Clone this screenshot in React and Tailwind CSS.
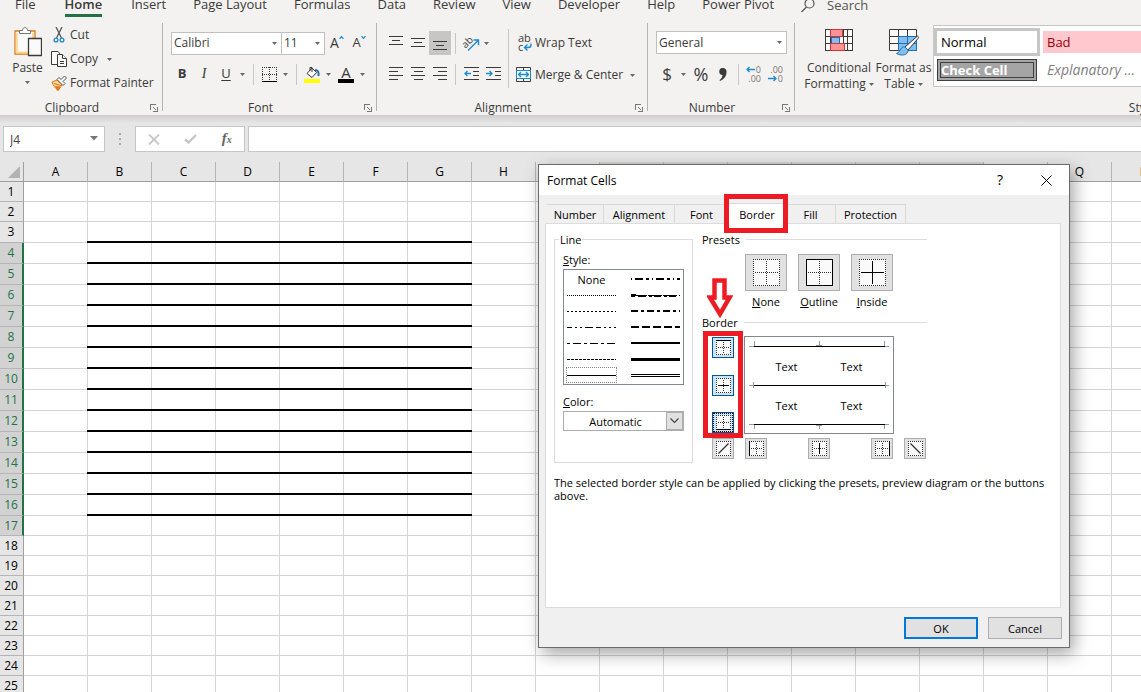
import { useState } from "react";
import clsx from "clsx";

const MENU = ["File", "Home", "Insert", "Page Layout", "Formulas", "Data", "Review", "View", "Developer", "Help", "Power Pivot"];
const COLUMNS = "ABCDEFGHIJKLMNOPQRSTUVWXYZ".split("");
const ROWS = Array.from({ length: 30 }, (_, i) => i + 1);

const LINE_STYLES = [
    { name: "None" },
    { name: "Dash dot dot", width: 2, dash: "1 3 8 3 3 3" },
    { name: "Hair", width: 1, dash: "1 1" },
    { name: "Slanted dash dot", slant: true },
    { name: "Dotted", width: 1, dash: "2 2" },
    { name: "Medium dash dot", width: 2, dash: "7 3 3 3" },
    { name: "Thin dash dot dot", width: 1, dash: "5 3 2 3 2 3 8 3" },
    { name: "Medium dashed", width: 2, dash: "8 3" },
    { name: "Thin dash dot", width: 1, dash: "3 3 8 3" },
    { name: "Medium", width: 2 },
    { name: "Dashed", width: 1, dash: "3 1" },
    { name: "Thick", width: 3 },
    { name: "Thin", width: 1 },
    { name: "Double", double: true },
];

function Caret({ className }) {
    return (
        <svg width="5" height="3" viewBox="0 0 5 3" className={clsx("shrink-0", className)} aria-hidden="true">
            <path d="M0 0h5L2.500 3z" fill="#666" />
        </svg>
    );
}

function Launcher() {
    return (
        <svg width="8" height="8" viewBox="0 0 8 8" fill="none" stroke="#777" shapeRendering="crispEdges" aria-hidden="true">
            <path d="M.5 6V.5H6M3 3l3 3M7.500 3v4.500H3" />
        </svg>
    );
}

function Group({ label, className, children }) {
    return (
        <>
            <section className={clsx("flex shrink-0 flex-col", className)}>
                <div className="h-[78px]">{children}</div>
                <footer className="relative pr-[18px] text-center leading-[14px]">
                    {label}
                    <button aria-label={`${label} settings`} className="absolute right-1 top-[3px]">
                        <Launcher />
                    </button>
                </footer>
            </section>
            <div className="h-[88px] w-px shrink-0 bg-[#b5b3b1]" />
        </>
    );
}

function IconButton({ label, className, children }) {
    return (
        <button aria-label={label} className={clsx("flex h-6 w-[22px] items-center justify-center", className)}>
            {children}
        </button>
    );
}

function Separator() {
    return <div className="h-[21px] w-px shrink-0 bg-[#c8c6c4]" />;
}

function RibbonSelect({ label, value, className }) {
    return (
        <div className={clsx("relative h-[23px] border border-[#c2c0be] bg-white", className)}>
            <select aria-label={label} className="h-full w-full appearance-none pl-[2px] outline-none">
                <option>{value}</option>
            </select>
            <Caret className="pointer-events-none absolute right-1 top-[9px]" />
        </div>
    );
}

function Lines({ rows, arrow }) {
    return (
        <svg width="15" height="14" viewBox="0 0 15 14" shapeRendering="crispEdges" aria-hidden="true">
            {rows.map(([x1, x2, y]) => (
                <path key={y} d={`M${x1} ${y}.5H${x2}`} stroke="#3b3a39" />
            ))}
            {arrow === "left" && <path d="M7 6.500H1M3.500 4L1 6.500 3.500 9" fill="none" stroke="#1e8bcd" strokeWidth="1.300" shapeRendering="auto" />}
            {arrow === "right" && <path d="M0 6.500h6M3.500 4L6 6.500 3.500 9" fill="none" stroke="#1e8bcd" strokeWidth="1.300" shapeRendering="auto" />}
        </svg>
    );
}

function ClipboardGroup() {
    return (
        <Group label="Clipboard" className="w-[162px]">
            <div className="flex">
                <button className="flex w-[51px] flex-col items-center pl-1 pt-[3px]">
                    <svg width="28" height="31" viewBox="0 0 28 31" fill="none" aria-hidden="true">
                        <path d="M1 5h20v23H1z" fill="#fafafa" stroke="#e07a1a" strokeWidth="1.300" />
                        <path d="M2.800 7v19.500H14" stroke="#fbd793" strokeWidth="2" />
                        <path d="M19 7v5" stroke="#fbd793" strokeWidth="2" />
                        <path d="M5.500 7.500V4.500h3C8.500 .5 13.500 .5 13.500 4.500h3v3z" fill="#fff" stroke="#797774" />
                        <path d="M14.500 12.500h13v17h-13z" fill="#fafafa" stroke="#3b3a39" strokeWidth="1.300" />
                    </svg>
                    <span className="mt-[3px] leading-4">Paste</span>
                    <Caret className="mt-[5px]" />
                </button>
                <div className="flex flex-col">
                    <button className="flex h-6 items-center gap-[3px]">
                        <svg width="16" height="16" viewBox="0 0 16 16" fill="none" aria-hidden="true">
                            <path d="M5 0l5.500 11M11 0L5.500 11" stroke="#555" strokeWidth="1.300" />
                            <circle cx="5" cy="13" r="1.900" stroke="#1e8bcd" strokeWidth="1.300" />
                            <circle cx="11" cy="13" r="1.900" stroke="#1e8bcd" strokeWidth="1.300" />
                        </svg>
                        Cut
                    </button>
                    <button className="flex h-6 items-center gap-[3px]">
                        <svg width="16" height="16" viewBox="0 0 16 16" fill="#fafafa" stroke="#3b3a39" aria-hidden="true">
                            <path d="M6 13.500H.5V.5H7L9 3" />
                            <path d="M6.500 3.500h5l4 4v8h-9z" />
                            <path d="M11.500 3.500v4h4M9 10.500h4M9 12.500h4" />
                        </svg>
                        Copy
                        <Caret className="ml-[6px]" />
                    </button>
                    <button className="flex h-6 items-center gap-[3px]">
                        <svg width="16" height="16" viewBox="0 0 16 16" aria-hidden="true">
                            <path d="M1 7l5-2 5 5-4 5.500C4 13 2 10 1 7z" fill="#fbd793" stroke="#e07a1a" />
                            <path d="M3 8.500l7 2M4.500 11.500L9 12l-2 3.500z" fill="#e07a1a" stroke="#e07a1a" />
                            <path d="M6 4.500L8 2.500l2 2L13.500 1 15.500 3 12 6.500l2 2L12 10.500z" fill="#fafafa" stroke="#555" />
                        </svg>
                        Format Painter
                    </button>
                </div>
            </div>
        </Group>
    );
}

function FontGroup() {
    return (
        <Group label="Font" className="w-[213px]">
            <div className="flex items-center pl-2 pt-2">
                <RibbonSelect label="Font name" value="Calibri" className="w-[111px]" />
                <RibbonSelect label="Font size" value="11" className="w-[43px] border-l-0" />
                <IconButton label="Increase font size" className="ml-px">
                    <span className="text-sm">A</span>
                    <svg width="5" height="3" viewBox="0 0 5 3" fill="none" stroke="#1e8bcd" strokeWidth="1.200" className="mb-3" aria-hidden="true">
                        <path d="M.5 3l2-2.500 2 2.500" />
                    </svg>
                </IconButton>
                <IconButton label="Decrease font size">
                    <span className="text-[13px]">A</span>
                    <svg width="5" height="3" viewBox="0 0 5 3" fill="none" stroke="#1e8bcd" strokeWidth="1.200" className="mb-3" aria-hidden="true">
                        <path d="M.5 0l2 2.500 2-2.500" />
                    </svg>
                </IconButton>
            </div>
            <div className="flex items-center pl-2 pt-[7px]">
                <IconButton label="Bold"><b className="text-[13px]">B</b></IconButton>
                <IconButton label="Italic"><i className="font-['Liberation_Serif',serif] text-sm">I</i></IconButton>
                <IconButton label="Underline"><u className="text-[13px] underline-offset-2">U</u></IconButton>
                <Caret className="ml-[3px] mr-2" />
                <Separator />
                <IconButton label="Borders" className="ml-1">
                    <svg width="15" height="15" viewBox="0 0 15 15" stroke="#3b3a39" fill="none" shapeRendering="crispEdges" aria-hidden="true">
                        <path d="M0 .5h15M.5 0v14M14.500 0v14M7.500 0v14M0 7.500h15" strokeDasharray="1 1" />
                        <path d="M0 14.500h15" stroke="#000" />
                    </svg>
                </IconButton>
                <Caret className="ml-[3px] mr-2" />
                <Separator />
                <IconButton label="Fill color" className="ml-1">
                    <svg width="17" height="17" viewBox="0 0 17 17" aria-hidden="true">
                        <path d="M3 7.500L8 2l4.500 4.500L8 11.500z" fill="#fafafa" stroke="#3b3a39" />
                        <path d="M6 5V1.500h2V6" fill="none" stroke="#3b3a39" />
                        <path d="M11 4c3 0 4 2 3.500 6" fill="none" stroke="#2a6cab" strokeWidth="2" />
                        <path d="M0 13h16v4H0z" fill="#ffff00" />
                    </svg>
                </IconButton>
                <Caret className="ml-[3px] mr-1" />
                <IconButton label="Font color">
                    <span className="flex flex-col items-center">
                        <span className="text-[15px] leading-[13px]">A</span>
                        <span className="h-1 w-4 bg-black" />
                    </span>
                </IconButton>
                <Caret className="ml-[3px]" />
            </div>
        </Group>
    );
}

function AlignmentGroup() {
    return (
        <Group label="Alignment" className="w-[270px]">
            <div className="flex">
                <div className="pl-2 pt-2">
                    <div className="flex items-center">
                        <IconButton label="Top align"><Lines rows={[[0, 14, 0], [3, 11, 4], [0, 14, 8]]} /></IconButton>
                        <IconButton label="Middle align"><Lines rows={[[0, 14, 2], [3, 11, 6], [0, 14, 10]]} /></IconButton>
                        <IconButton label="Bottom align" className="bg-[#c8c6c4]"><Lines rows={[[0, 14, 5], [3, 11, 9], [0, 14, 13]]} /></IconButton>
                        <span className="w-1" />
                        <Separator />
                        <button aria-label="Orientation" className="ml-[6px] flex items-center gap-1">
                            <svg width="18" height="17" viewBox="0 0 18 17" fill="none" aria-hidden="true">
                                <text x="0" y="11" fontSize="10" fill="#3b3a39" transform="rotate(-45 5 8)">ab</text>
                                <path d="M6 15.500L16 5.500M11.500 5H16.500V10" stroke="#1e8bcd" strokeWidth="1.400" />
                            </svg>
                            <Caret />
                        </button>
                    </div>
                    <div className="flex items-center pt-[7px]">
                        <IconButton label="Align left"><Lines rows={[[0, 14, 0], [0, 9, 4], [0, 14, 8], [0, 9, 12]]} /></IconButton>
                        <IconButton label="Center"><Lines rows={[[0, 14, 0], [3, 12, 4], [0, 14, 8], [3, 12, 12]]} /></IconButton>
                        <IconButton label="Align right"><Lines rows={[[0, 14, 0], [5, 14, 4], [0, 14, 8], [5, 14, 12]]} /></IconButton>
                        <span className="w-1" />
                        <Separator />
                        <IconButton label="Decrease indent" className="ml-1"><Lines rows={[[0, 15, 0], [9, 15, 4], [9, 15, 8], [0, 15, 12]]} arrow="left" /></IconButton>
                        <IconButton label="Increase indent"><Lines rows={[[0, 15, 0], [9, 15, 4], [9, 15, 8], [0, 15, 12]]} arrow="right" /></IconButton>
                    </div>
                </div>
                <div className="ml-1 mt-[6px] h-[59px] w-px bg-[#c8c6c4]" />
                <div className="flex flex-col gap-2 pl-[7px] pt-2">
                    <button className="flex h-6 items-center gap-[3px]">
                        <svg width="16" height="18" viewBox="0 0 16 18" fill="none" aria-hidden="true">
                            <text x="2" y="8" fontSize="11" fill="#3b3a39">ab</text>
                            <text x="2" y="17" fontSize="11" fill="#3b3a39">c</text>
                            <path d="M15 9.500v1.500c0 2-1 2.500-3 2.500H9M11.500 10.500l-3 3 3 3" stroke="#1e8bcd" strokeWidth="1.400" />
                        </svg>
                        Wrap Text
                    </button>
                    <button className="flex h-6 items-center gap-[3px]">
                        <svg width="16" height="16" viewBox="0 0 16 16" fill="none" aria-hidden="true">
                            <path d="M.5 .5h14v14H.5zM7.500 .5v3M7.500 12v3" stroke="#3b3a39" />
                            <path d="M.5 3.500h14v8H.5z" fill="#fafafa" stroke="#1e8bcd" />
                            <path d="M2.500 7.500h10M5 5L2.500 7.500 5 10M10 5l2.500 2.500L10 10" stroke="#1e8bcd" strokeWidth="1.300" />
                        </svg>
                        Merge &amp; Center
                        <Caret className="ml-1" />
                    </button>
                </div>
            </div>
        </Group>
    );
}

function DecimalIcon({ decrease }) {
    return (
        <svg width="16" height="17" viewBox="0 0 16 17" fill="none" aria-hidden="true">
            <text x="15" y="7" fontSize="9" fill="#797774" textAnchor="end">{decrease ? ".00" : "0"}</text>
            <text x="15" y="16" fontSize="9" fill="#797774" textAnchor="end">{decrease ? "0" : ".00"}</text>
            {decrease ? (
                <path d="M0 12.500h8M5.500 10L8 12.500 5.500 15" stroke="#1e8bcd" strokeWidth="1.400" />
            ) : (
                <path d="M9 3.500H1M3.500 1L1 3.500 3.500 6" stroke="#1e8bcd" strokeWidth="1.400" />
            )}
        </svg>
    );
}

function NumberGroup() {
    return (
        <Group label="Number" className="w-[146px]">
            <div className="pl-2 pt-2">
                <RibbonSelect label="Number format" value="General" className="w-[131px]" />
                <div className="flex items-center pt-2">
                    <IconButton label="Accounting format"><span className="text-[17px]">$</span></IconButton>
                    <Caret className="ml-[3px] mr-1" />
                    <IconButton label="Percent style"><span className="text-[18px]">%</span></IconButton>
                    <IconButton label="Comma style">
                        <svg width="8" height="13" viewBox="0 0 8 13" fill="#3b3a39" aria-hidden="true">
                            <path d="M4 0a3.500 3.500 0 0 1 3.500 4C7.500 8 5 11.500 1 13l-.5-1c2-1.200 3-3 3-5A3.500 3.500 0 0 1 4 0z" />
                        </svg>
                    </IconButton>
                    <span className="w-1" />
                    <Separator />
                    <IconButton label="Increase decimal" className="ml-1"><DecimalIcon /></IconButton>
                    <IconButton label="Decrease decimal"><DecimalIcon decrease /></IconButton>
                </div>
            </div>
        </Group>
    );
}

function StylesGroup() {
    return (
        <Group label="Styles" className="w-[718px]">
            <div className="flex">
                <button className="ml-[9px] flex w-[70px] flex-col items-center pt-[6px] leading-4">
                    <svg width="28" height="23" viewBox="0 0 28 23" fill="none" shapeRendering="crispEdges" aria-hidden="true">
                        <path d="M.5 .5h27v21H.5zM5.500 0v22M18.500 0v22M22.500 0v22M0 7.500h28M0 14.500h28" fill="#fafafa" stroke="#3b3a39" />
                        <path d="M5.500 .5h12v7h-12z" fill="#ff9294" stroke="#d13438" />
                        <path d="M6 8h8v6H6z" fill="#83beec" stroke="#1e6fb8" />
                        <path d="M5.500 14.500h14v7h-14z" fill="#ff9294" stroke="#d13438" />
                    </svg>
                    <span className="mt-2">Conditional</span>
                    <span className="flex items-center gap-[3px]">Formatting <Caret /></span>
                </button>
                <button className="flex w-[59px] flex-col items-center pt-[6px] leading-4">
                    <svg width="30" height="27" viewBox="0 0 30 27" fill="none" className="-mb-1" aria-hidden="true">
                        <path d="M.5 .5h27v21H.5z" fill="#fafafa" stroke="#3b3a39" />
                        <path d="M9.500 7.500h18v14h-18z" fill="#83beec" stroke="#1e6fb8" />
                        <path d="M9.500 .5v7M18.500 .5v7M.5 7.500h9M.5 14.500h9" stroke="#3b3a39" />
                        <path d="M18.500 7.500v14M9.500 14.500h18" stroke="#1e6fb8" />
                        <path d="M28.500 7c1 .5 1.300 1.500 .5 2.500L19 21l-3-3z" fill="#fafafa" stroke="#3b3a39" />
                        <path d="M16 18c-5-1-3.500 4.500-8.500 6.500 5 3 12 1.500 11.500-3.500z" fill="#83beec" stroke="#1e6fb8" />
                    </svg>
                    <span className="mt-2 whitespace-nowrap">Format as</span>
                    <span className="flex items-center gap-[3px]">Table <Caret /></span>
                </button>
                <div className="mt-[2px] grid h-[62px] flex-1 auto-rows-min grid-cols-[106px_106px] gap-x-[3px] gap-y-[3px] border border-[#c8c6c4] bg-white pt-[2px] text-[13px] leading-4">
                    <button className="h-7 border-[3px] border-[#c6c6c6] bg-white pl-1 text-left text-black">Normal</button>
                    <button className="my-[3px] bg-[#ffc7ce] pl-1 text-left text-[#9c0006]">Bad</button>
                    <button className="mx-[3px] h-[22px] border-4 border-double border-[#3f3f3f] bg-[#a5a5a5] text-left font-bold leading-3 text-white">Check Cell</button>
                    <button className="whitespace-nowrap pl-1 text-left text-sm leading-4 italic text-[#7f7f7f]">Explanatory ...</button>
                </div>
            </div>
        </Group>
    );
}

function Ribbon() {
    return (
        <header className="overflow-hidden border-b border-[#d0cecd] bg-[#f3f2f1] text-[12px] text-[#3b3a39]">
            <nav className="flex h-[23px] gap-[27px] pl-[15px] text-[13px] leading-[9px]">
                {MENU.map((item) => (
                    <a
                        key={item}
                        href="#"
                        className={clsx("h-[17px] whitespace-nowrap", item === "Home" && "mx-[2px] border-b-[3px] border-[#217346] font-semibold")}
                    >
                        {item}
                    </a>
                ))}
                <label className="flex items-start gap-3">
                    <svg width="14" height="13" viewBox="0 0 14 13" fill="none" stroke="#555" strokeWidth="1.200" aria-hidden="true">
                        <circle cx="8.500" cy="3.500" r="4.500" />
                        <path d="M5.500 7L.5 12" />
                    </svg>
                    <input aria-label="Search" placeholder="Search" className="-mt-1 h-[18px] w-24 bg-transparent leading-[18px] outline-none placeholder:text-[#555]" />
                </label>
            </nav>
            <div className="flex h-[92px]">
                <ClipboardGroup />
                <FontGroup />
                <AlignmentGroup />
                <NumberGroup />
                <StylesGroup />
            </div>
        </header>
    );
}

function FormulaBar() {
    return (
        <div className="flex bg-linear-to-b from-[#d0d0d0] to-[#e6e6e6] to-15% pb-[10px] pl-[3px] pt-[10px]">
            <div className="relative h-[26px] w-[102px] border border-[#c6c6c6] bg-white">
                <input aria-label="Name box" defaultValue="J4" className="block h-6 w-full pl-[6px] text-[12px] text-[#444] outline-none" />
                <svg width="8" height="5" viewBox="0 0 8 5" className="absolute right-[6px] top-[9px]" aria-hidden="true">
                    <path d="M0 0h8L4 4.500z" fill="#777" />
                </svg>
            </div>
            <div className="flex w-[30px] flex-col items-center justify-center gap-[3px]">
                <span className="size-[2px] bg-[#aaa]" />
                <span className="size-[2px] bg-[#aaa]" />
                <span className="size-[2px] bg-[#aaa]" />
            </div>
            <div className="flex h-[26px] w-[110px] items-center justify-around border border-[#c6c6c6] bg-white">
                <button aria-label="Cancel entry">
                    <svg width="12" height="11" viewBox="0 0 12 11" stroke="#c6c6c6" strokeWidth="1.800" aria-hidden="true">
                        <path d="M1 .5l10 10M11 .5l-10 10" />
                    </svg>
                </button>
                <button aria-label="Confirm entry">
                    <svg width="13" height="10" viewBox="0 0 13 10" fill="none" stroke="#c6c6c6" strokeWidth="2.400" aria-hidden="true">
                        <path d="M1 5.500L4.500 8.500 12 1" />
                    </svg>
                </button>
                <button aria-label="Insert function" className="font-['Liberation_Serif',serif] text-[15px] font-bold italic leading-4 text-[#666]">
                    f<span className="text-[10px]">x</span>
                </button>
            </div>
            <input aria-label="Formula" className="ml-[3px] h-[26px] min-w-0 flex-1 border border-r-0 border-[#c6c6c6] bg-white px-2 text-[12px] outline-none" />
        </div>
    );
}

function Sheet() {
    return (
        <div className="min-h-0 flex-1 overflow-hidden bg-white text-[12px] leading-4 text-black">
            <table className="w-[1688px] table-fixed border-separate border-spacing-0">
                <thead>
                    <tr className="h-5 bg-[#e6e6e6]">
                        <th className="w-6 border-b border-r border-[#9f9f9f] p-0">
                            <svg width="12" height="12" viewBox="0 0 12 12" className="ml-2" aria-hidden="true">
                                <path d="M12 0v12H0z" fill="#b2b2b2" />
                            </svg>
                        </th>
                        {COLUMNS.map((col) => (
                            <th
                                key={col}
                                scope="col"
                                className={clsx(
                                    "w-16 border-b border-r border-[#9f9f9f] border-r-[#b5b5b5] p-0 font-normal",
                                    col >= "J" && col <= "O" && "border-b-2 border-b-[#217346] bg-[#d2d2d2] text-[#217346]"
                                )}
                            >
                                {col}
                            </th>
                        ))}
                    </tr>
                </thead>
                <tbody>
                    {ROWS.map((row) => {
                        const selected = row >= 4 && row <= 17;
                        const ruled = row >= 3 && row <= 16;
                        return (
                            <tr key={row} className={ruled ? "h-[21px]" : "h-5"}>
                                <th
                                    scope="row"
                                    className={clsx(
                                        "border-b p-0 text-center font-normal",
                                        selected
                                            ? "border-r-2 border-b-[#b5b5b5] border-r-[#217346] bg-[#d2d2d2] text-[#217346]"
                                            : "border-r border-b-[#b5b5b5] border-r-[#9f9f9f] bg-[#e6e6e6] pr-px"
                                    )}
                                >
                                    {row}
                                </th>
                                {COLUMNS.map((col) => {
                                    const lined = ruled && col >= "B" && col <= "G";
                                    return (
                                        <td
                                            key={col}
                                            className={clsx(
                                                "border-r border-r-[#d4d4d4] p-0 align-bottom",
                                                !lined && "border-b border-b-[#d4d4d4]"
                                            )}
                                        >
                                            {lined && <div className="-mx-px h-[2px] bg-black" />}
                                        </td>
                                    );
                                })}
                            </tr>
                        );
                    })}
                </tbody>
            </table>
        </div>
    );
}

function CellBorderIcon({ size = 15, solid, diagonal }) {
    const mid = size / 2;
    const end = size - 0.5;
    return (
        <svg width={size} height={size} viewBox={`0 0 ${size} ${size}`} fill="none" shapeRendering="crispEdges" aria-hidden="true">
            <path d={`M0 0h${size}v${size}H0z`} fill="#fafafa" />
            <path d={`M0 .5h${size}M0 ${end}h${size}M.5 0v${size}M${end} 0v${size}`} stroke="#333" strokeDasharray="1 1" />
            {!diagonal && <path d={`M${mid} 2v${size - 4}M2 ${mid}h${size - 4}`} stroke="#333" strokeDasharray="1 1" />}
            {solid && <path d={solid} stroke="#000" />}
            {diagonal && <path d={diagonal} stroke="#333" strokeWidth="1.200" shapeRendering="auto" />}
        </svg>
    );
}

function BorderButton({ label, pressed, focused, ...icon }) {
    return (
        <button
            aria-label={label}
            aria-pressed={pressed}
            className={clsx(
                "flex h-[21px] w-[22px] items-center justify-center border",
                pressed ? "border-[#005499] bg-[#cce4f7]" : "border-[#adadad] bg-[#e1e1e1]",
                focused && "outline-1 -outline-offset-2 outline-dotted outline-black"
            )}
        >
            <CellBorderIcon {...icon} />
        </button>
    );
}

function Preset({ label, solid }) {
    return (
        <div className="flex w-[42px] flex-col items-center gap-1">
            <button aria-label={label} className="flex h-[37px] w-full items-center justify-center border border-[#adadad] bg-[#e1e1e1]">
                <CellBorderIcon size={27} solid={solid} />
            </button>
            <span>
                <u>{label[0]}</u>
                {label.slice(1)}
            </span>
        </div>
    );
}

function Heading({ children }) {
    return (
        <h3 className="flex items-center gap-[6px]">
            {children}
            <span className="h-px flex-1 bg-[#dcdcdc]" />
        </h3>
    );
}

function LineSample({ name, width, dash, slant, double }) {
    if (name === "None") return <span>None</span>;
    return (
        <svg width="49" height="5" viewBox="0 0 49 5" stroke="#000" shapeRendering="crispEdges" aria-hidden="true">
            {double && <path d="M0 1.500h49M0 3.500h49" />}
            {slant && <path d="M0 1.500h5M0 2.500h16M17 2.500h14M32 2.500h14M48 2.500h1M0 3.500h4M7 3.500h8M18 3.500h3M23 3.500h7M33 3.500h3M38 3.500h7" />}
            {width && <path d={width === 2 ? "M0 2h49" : "M0 2.500h49"} strokeWidth={width} strokeDasharray={dash} />}
        </svg>
    );
}

function LineSection() {
    const [style, setStyle] = useState("Thin");
    return (
        <fieldset className="h-[230px] w-[138px] border border-[#dcdcdc] px-2">
            <legend className="-ml-1 px-px">Line</legend>
            <p className="mt-[7px]"><u>S</u>tyle:</p>
            <div role="listbox" aria-label="Style" className="mt-[3px] grid w-[121px] grid-cols-2 gap-x-[13px] border border-[#828790] px-[2px] py-px">
                {LINE_STYLES.map((line) => (
                    <button
                        key={line.name}
                        role="option"
                        aria-label={line.name}
                        aria-selected={style === line.name}
                        onClick={() => setStyle(line.name)}
                        className={clsx(
                            "flex h-4 items-center justify-center",
                            style === line.name && "outline-1 -outline-offset-1 outline-dotted outline-[#888]"
                        )}
                    >
                        <LineSample {...line} />
                    </button>
                ))}
            </div>
            <label htmlFor="line-color" className="mt-[10px] block"><u>C</u>olor:</label>
            <div className="relative mt-[3px] h-5 w-[121px] border border-[#adadad]">
                <select id="line-color" className="block h-full w-full appearance-none pr-4 [text-align-last:center] outline-none">
                    <option>Automatic</option>
                </select>
                <span className="pointer-events-none absolute inset-y-0 right-0 flex w-[17px] items-center justify-center border border-[#adadad] bg-[#e1e1e1]">
                    <svg width="9" height="6" viewBox="0 0 9 6" fill="none" stroke="#444" strokeWidth="1.200" aria-hidden="true">
                        <path d="M.5 .5l4 4 4-4" />
                    </svg>
                </span>
            </div>
        </fieldset>
    );
}

function BorderPreview() {
    return (
        <div className="relative h-[98px] w-[150px] border border-[#828790]">
            <svg width="148" height="96" viewBox="0 0 148 96" fill="none" shapeRendering="crispEdges" className="absolute" aria-hidden="true">
                <path
                    d="M4 9.500h5M9.500 4v5M71 8.500h6M74.500 4v5M139.500 4v5M140 9.500h4M4 48.500h5M8.500 45v6M140.500 45v6M141 48.500h3M4 87.500h5M9.500 88v4M71 88.500h6M74.500 88v4M139.500 88v4M140 87.500h4"
                    stroke="#999"
                />
                <path d="M9 9.500h131M9 48.500h131M9 87.500h131" stroke="#000" />
            </svg>
            <div className="grid h-full grid-cols-2 grid-rows-2 place-items-center px-[9px] pb-2 pt-[10px]">
                <span>Text</span>
                <span>Text</span>
                <span>Text</span>
                <span>Text</span>
            </div>
        </div>
    );
}

function BorderSection() {
    return (
        <div className="w-[225px]">
            <Heading>Presets</Heading>
            <div className="mt-2 flex gap-[11px] pl-[43px]">
                <Preset label="None" />
                <Preset label="Outline" solid="M.5 .5h26v26H.5z" />
                <Preset label="Inside" solid="M13.500 2v23M2 13.500h23" />
            </div>
            <div className="mt-2">
                <Heading>Border</Heading>
            </div>
            <div className="mt-[7px] flex gap-[10px] pl-[10px]">
                <div className="flex flex-col justify-between py-px">
                    <BorderButton label="Top border" pressed solid="M0 .5h15" />
                    <BorderButton label="Inner horizontal border" pressed solid="M2 7.500h11" />
                    <BorderButton label="Bottom border" pressed focused solid="M0 14.500h15" />
                </div>
                <BorderPreview />
            </div>
            <div className="mt-1 flex gap-[11px] pl-[10px]">
                <BorderButton label="Diagonal up border" diagonal="M2.500 12.500l10-10" />
                <div className="flex w-[148px] justify-between">
                    <BorderButton label="Left border" solid="M.5 0v15" />
                    <BorderButton label="Inner vertical border" solid="M7.500 2v11" />
                    <BorderButton label="Right border" solid="M14.500 0v15" />
                </div>
                <BorderButton label="Diagonal down border" diagonal="M2.500 2.500l10 10" />
            </div>
        </div>
    );
}

const TABS = [
    { name: "Number", width: "w-[57px]" },
    { name: "Alignment", width: "w-[71px]" },
    { name: "Font", width: "w-[54px]" },
    { name: "Border", width: "w-[57px]" },
    { name: "Fill", width: "w-[50px]" },
    { name: "Protection", width: "w-[70px]" },
];

function FormatCellsDialog() {
    const [tab, setTab] = useState("Border");
    return (
        <div
            role="dialog"
            aria-label="Format Cells"
            className="absolute left-[538px] top-[164px] w-[532px] border border-[#6b6b6b] bg-[#f0f0f0] text-[11px] leading-[13px] text-black shadow-[4px_6px_16px_rgba(0,0,0,0.35)]"
        >
            <div className="flex h-[30px] items-center bg-white pl-2">
                <h2 className="flex-1 text-[12px]">Format Cells</h2>
                <button aria-label="Help" className="w-[46px] text-sm">?</button>
                <button aria-label="Close" className="flex w-[46px] justify-center">
                    <svg width="11" height="11" viewBox="0 0 11 11" stroke="#000" aria-hidden="true">
                        <path d="M.5 .5l10 10M10.500 .5l-10 10" />
                    </svg>
                </button>
            </div>
            <div className="px-[6px] pb-2 pt-2">
                <div role="tablist" className="flex items-end pl-[2px]">
                    {TABS.map(({ name, width }) => (
                        <button
                            key={name}
                            role="tab"
                            aria-selected={tab === name}
                            onClick={() => setTab(name)}
                            className={clsx(
                                "border-r border-t border-[#d9d9d9] text-center",
                                width,
                                tab === name ? "relative -mb-px h-[21px] bg-white" : "h-[19px]"
                            )}
                        >
                            {name}
                        </button>
                    ))}
                </div>
                <div className="h-[385px] w-[516px] border border-[#dcdcdc] bg-white px-2 pt-[9px]">
                    <div className="flex gap-[9px]">
                        <LineSection />
                        <BorderSection />
                    </div>
                    <p className="mt-[13px]">
                        The selected border style can be applied by clicking the presets, preview diagram or the buttons above.
                    </p>
                </div>
                <div className="flex justify-end gap-[10px] pr-px pt-[9px]">
                    <button className="h-[22px] w-[74px] border-2 border-[#0078d7] bg-[#e1e1e1]">OK</button>
                    <button className="h-[22px] w-[74px] border border-[#adadad] bg-[#e1e1e1]">Cancel</button>
                </div>
            </div>
            {/* highlight marks drawn over the dialog */}
            <div className="pointer-events-none absolute left-[185px] top-[29px] h-[39px] w-16 border-[5px] border-[#ed1c24]" />
            <div className="pointer-events-none absolute left-[164px] top-[166px] h-[107px] w-10 border-[5px] border-[#ed1c24]" />
            <svg width="26" height="40" viewBox="0 0 26 40" className="pointer-events-none absolute left-[168px] top-[113px]" aria-hidden="true">
                <path d="M7.500 2.500h10v17h5L13 36 3 19.500h4.500z" fill="#fff" stroke="#ed1c24" strokeWidth="4.500" />
            </svg>
        </div>
    );
}

export default function App() {
    return (
        <div className="relative flex h-screen flex-col overflow-hidden bg-[#e6e6e6] font-['Open_Sans',sans-serif]">
            <Ribbon />
            <FormulaBar />
            <Sheet />
            <FormatCellsDialog />
        </div>
    );
}
